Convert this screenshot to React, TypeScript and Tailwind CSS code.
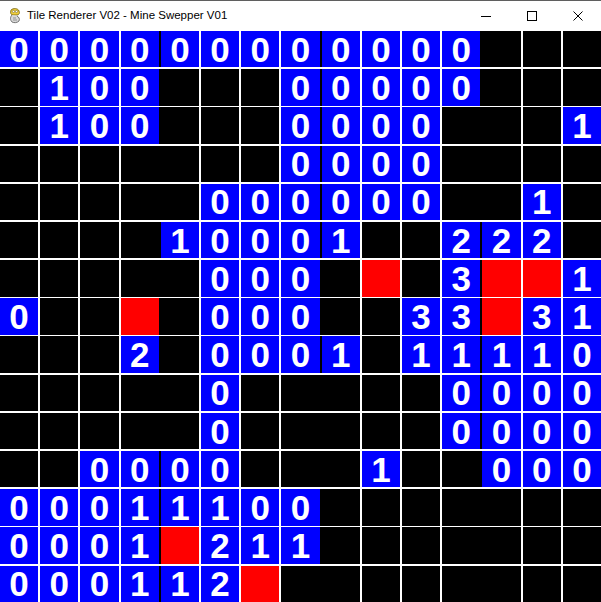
const BOARD: string[] = [
  '000000000000...',
  '.100...00000...',
  '.100...0000...1',
  '.......0000....',
  '.....000000..1.',
  '....10001..222.',
  '.....000.x.3xx1',
  '0..x.000..33x31',
  '...2.0001.11110',
  '.....0.....0000',
  '.....0.....0000',
  '..0000...1..000',
  '00011100.......',
  '0001x211.......',
  '000112x........',
];

function PygameIcon() {
  return (
    <svg width="16" height="16" viewBox="0 0 16 16">
      <path d="M4 2 C6 0, 11 0, 12 3 C13 5, 12 7, 10 7 L6 7 C4 7, 3 5, 4 2 Z" fill="#f4d23a" stroke="#6b5a10" strokeWidth="0.8" />
      <circle cx="6.5" cy="3.5" r="1.1" fill="#fff" stroke="#333" strokeWidth="0.4" />
      <circle cx="9.5" cy="3.5" r="1.1" fill="#fff" stroke="#333" strokeWidth="0.4" />
      <path d="M5 7 C3 9, 3 12, 5 14 C7 15, 10 15, 12 13 C13 11, 12 9, 10 8" fill="#d9d9d9" stroke="#555" strokeWidth="0.8" />
      <path d="M6 10 L9 10 M6 12 L10 12" stroke="#777" strokeWidth="0.7" />
    </svg>
  );
}

function TitleBar() {
  return (
    <div className="h-[31px] bg-white border-t border-[#5f5f5f] flex items-center shrink-0">
      <div className="w-[27px] flex items-center justify-center pl-[2px]">
        <PygameIcon />
      </div>
      <span
        className="text-[11.5px] text-black leading-none"
        style={{ fontFamily: '"Liberation Sans", Arial, sans-serif' }}
      >
        Tile Renderer V02 - Mine Swepper V01
      </span>
      <div className="ml-auto flex h-full">
        <div className="w-[46px] h-full flex items-center justify-center">
          <div className="w-[10px] h-px bg-black" />
        </div>
        <div className="w-[46px] h-full flex items-center justify-center">
          <div className="w-[10px] h-[10px] border border-black" />
        </div>
        <div className="w-[46px] h-full flex items-center justify-center">
          <svg width="10" height="10" viewBox="0 0 10 10">
            <path d="M0.5 0.5 L9.5 9.5 M9.5 0.5 L0.5 9.5" stroke="#000" strokeWidth="1" />
          </svg>
        </div>
      </div>
    </div>
  );
}

function Tile({ value, col }: { value: string; col: number }) {
  const dark = col === 4 || col === 8 || col === 12 ? 'shadow-[-2px_0_0_#000]' : '';
  if (value === '.') return <div className={`bg-black ${dark}`} />;
  if (value === 'x') return <div className={`bg-[#ff0000] ${dark}`} />;
  return (
    <div
      className={`bg-[#0000ff] flex items-center justify-center text-white font-bold text-[35px] leading-none ${dark}`}
      style={{ fontFamily: '"Liberation Sans", Arial, sans-serif' }}
    >
      {value}
    </div>
  );
}

export default function App() {
  return (
    <div className="w-[601px] h-[602px] overflow-hidden bg-white flex flex-col">
      <TitleBar />
      <div className="grid grid-cols-15 grid-rows-15 gap-x-[2px] gap-y-[1.7px] h-[571px] bg-white shrink-0">
        {BOARD.flatMap((row, r) =>
          row.split('').map((v, c) => <Tile key={`${r}-${c}`} value={v} col={c} />)
        )}
      </div>
    </div>
  );
}
